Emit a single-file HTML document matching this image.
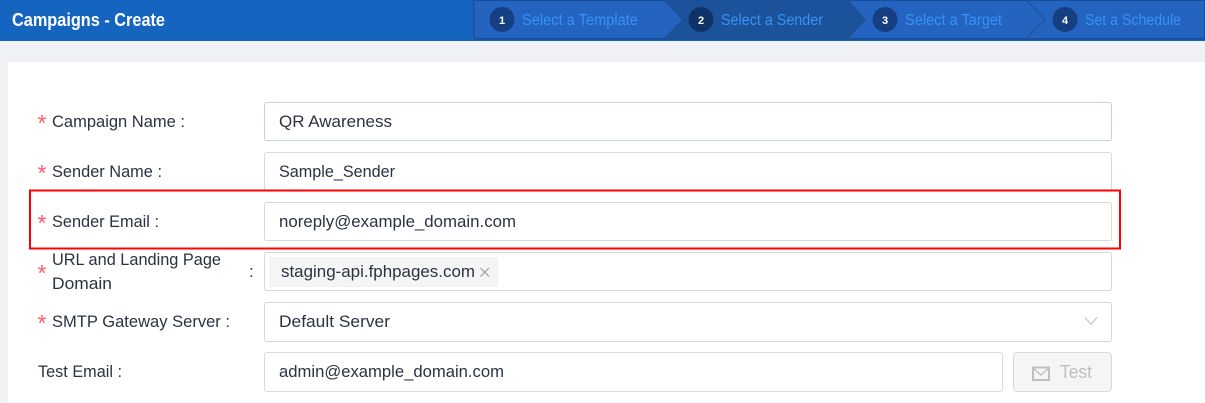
<!DOCTYPE html>
<html>
<head>
<meta charset="utf-8">
<style>
html,body{margin:0;padding:0;width:1205px;height:403px;overflow:hidden;background:#f0f2f5}
svg{display:block}
text{font-family:"Liberation Sans",sans-serif}
.l{font-size:17px;fill:#2b3240}
.v{font-size:17px;fill:#2b3240}
.s{font-size:15.5px;fill:#3593f5}
.n{font-size:11px;font-weight:bold;fill:#fff;text-anchor:middle}
.b{fill:#fff;stroke:#d9d9d9;stroke-width:1}
.a{font-size:23px;fill:#ff5a6b;text-anchor:middle}
</style>
</head>
<body>
<svg width="1205" height="403" viewBox="0 0 1205 403" xmlns="http://www.w3.org/2000/svg">
<rect width="1205" height="403" fill="#f0f2f5"/>
<rect x="0" y="0" width="1205" height="41" fill="#1565c0"/>
<text x="12" y="26" font-size="18" font-weight="bold" fill="#fff" textLength="153" lengthAdjust="spacingAndGlyphs">Campaigns - Create</text>

<path d="M473.500 0H1205V39H477a3 3 0 0 1-3-3z" fill="#2563c0" stroke="#184f99" stroke-width="1.500"/>
<path d="M664 1H849L866 19.500L849 38H664L682 19.500Z" fill="#1c5299"/>
<path d="M1027 1L1045 19.500L1027 38" fill="none" stroke="#1c5299" stroke-width="1.200"/>
<rect x="474" y="38" width="731" height="1.500" fill="#184f99"/>
<rect x="474" y="0" width="731" height="1" fill="#184f99"/>

<circle cx="502" cy="19.500" r="12.500" fill="#153f82"/>
<circle cx="701" cy="19.500" r="12.500" fill="#0f3366"/>
<circle cx="885" cy="19.500" r="12.500" fill="#153f82"/>
<circle cx="1065" cy="19.500" r="12.500" fill="#153f82"/>
<text class="n" x="502" y="24">1</text>
<text class="n" x="701" y="24">2</text>
<text class="n" x="885" y="24">3</text>
<text class="n" x="1065" y="24">4</text>
<text class="s" x="522" y="25" textLength="116" lengthAdjust="spacingAndGlyphs">Select a Template</text>
<text class="s" x="721" y="25" textLength="102" lengthAdjust="spacingAndGlyphs">Select a Sender</text>
<text class="s" x="905" y="25" textLength="97" lengthAdjust="spacingAndGlyphs">Select a Target</text>
<text class="s" x="1085" y="25" textLength="96" lengthAdjust="spacingAndGlyphs">Set a Schedule</text>

<rect x="8" y="62" width="1197" height="341" fill="#fff"/>

<rect x="264.500" y="102.500" width="847" height="38" rx="2" fill="#fff" stroke="#c3d4e2"/>
<rect class="b" x="264.500" y="152.500" width="847" height="38" rx="2"/>
<rect class="b" x="264.500" y="202.500" width="847" height="38" rx="2"/>
<rect class="b" x="264.500" y="252.500" width="847" height="38" rx="2"/>
<rect class="b" x="264.500" y="302.500" width="847" height="39" rx="2"/>
<rect class="b" x="264.500" y="352.500" width="738" height="39" rx="2"/>
<rect x="1013.500" y="352.500" width="98" height="39" rx="4" fill="#f5f5f5" stroke="#d9d9d9"/>

<rect x="30" y="190.500" width="1090" height="58" fill="none" stroke="#f00" stroke-width="2"/>

<text class="a" x="42" y="131">*</text>
<text class="a" x="42" y="181">*</text>
<text class="a" x="42" y="231">*</text>
<text class="a" x="42" y="281">*</text>
<text class="a" x="42" y="331">*</text>

<text class="l" x="52" y="127" textLength="133" lengthAdjust="spacingAndGlyphs">Campaign Name :</text>
<text class="l" x="52" y="177" textLength="110" lengthAdjust="spacingAndGlyphs">Sender Name :</text>
<text class="l" x="52" y="227" textLength="107" lengthAdjust="spacingAndGlyphs">Sender Email :</text>
<text class="l" x="52" y="265" textLength="169" lengthAdjust="spacingAndGlyphs">URL and Landing Page</text>
<text class="l" x="52" y="289" textLength="60" lengthAdjust="spacingAndGlyphs">Domain</text>
<text class="l" x="249" y="277">:</text>
<text class="l" x="52" y="327" textLength="178" lengthAdjust="spacingAndGlyphs">SMTP Gateway Server :</text>
<text class="l" x="38" y="377" textLength="84" lengthAdjust="spacingAndGlyphs">Test Email :</text>

<text class="v" x="279" y="127" textLength="113" lengthAdjust="spacingAndGlyphs">QR Awareness</text>
<text class="v" x="279" y="177" textLength="116" lengthAdjust="spacingAndGlyphs">Sample_Sender</text>
<text class="v" x="279" y="227" textLength="237" lengthAdjust="spacingAndGlyphs">noreply@example_domain.com</text>
<rect x="270" y="257.500" width="227.500" height="29" rx="2" fill="#f5f5f5" stroke="#f0f0f0"/>
<text class="v" x="281" y="277" textLength="194" lengthAdjust="spacingAndGlyphs">staging-api.fphpages.com</text>
<path d="M480.500 268L489 276.500M489 268L480.500 276.500" stroke="#9a9a9a" stroke-width="1.200" fill="none"/>
<text class="v" x="279" y="327" textLength="111" lengthAdjust="spacingAndGlyphs">Default Server</text>
<path d="M1085 317.500L1091 324.500L1097 317.500" fill="none" stroke="#c4c4c4" stroke-width="1.200"/>
<text class="v" x="279" y="377" textLength="225" lengthAdjust="spacingAndGlyphs">admin@example_domain.com</text>

<rect x="1033" y="367.500" width="16" height="12.500" fill="none" stroke="#c0c0c0" stroke-width="2"/>
<path d="M1033 368L1041 375L1049 368" fill="none" stroke="#c0c0c0" stroke-width="1.300"/>
<text x="1060" y="378" font-size="18" fill="#bfbfbf" textLength="32" lengthAdjust="spacingAndGlyphs">Test</text>
</svg>
</body>
</html>
